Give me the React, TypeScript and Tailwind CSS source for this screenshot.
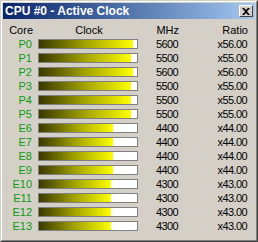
import React from 'react';

type Row = { core: string; mhz: number };

const rows: Row[] = [
  { core: 'P0', mhz: 5600 },
  { core: 'P1', mhz: 5500 },
  { core: 'P2', mhz: 5600 },
  { core: 'P3', mhz: 5500 },
  { core: 'P4', mhz: 5500 },
  { core: 'P5', mhz: 5500 },
  { core: 'E6', mhz: 4400 },
  { core: 'E7', mhz: 4400 },
  { core: 'E8', mhz: 4400 },
  { core: 'E9', mhz: 4400 },
  { core: 'E10', mhz: 4300 },
  { core: 'E11', mhz: 4300 },
  { core: 'E12', mhz: 4300 },
  { core: 'E13', mhz: 4300 },
];

const MAX_MHZ = 5850;

const ClockBar = ({ mhz }: { mhz: number }) => {
  const pct = Math.min(100, (mhz / MAX_MHZ) * 100);
  return (
    <div className="w-[100px] h-[10px] border border-[#808080] bg-white">
      <div
        className="h-full bg-gradient-to-r from-[#3a3a00] via-[#a4a400] to-[#ffff00]"
        style={{ width: `${pct}%` }}
      />
    </div>
  );
};

const App = () => {
  return (
    <div
      className="w-[258px] h-[242px] bg-[#d4d0c8] border border-t-[#d4d0c8] border-l-[#d4d0c8] border-r-[#404040] border-b-[#404040] overflow-hidden"
      style={{ fontFamily: '"Liberation Sans", Arial, sans-serif' }}
    >
      <div className="w-full h-full border border-t-white border-l-white border-r-[#808080] border-b-[#808080] p-px">
        {/* Title bar */}
        <div className="h-[16px] flex items-center justify-between bg-gradient-to-r from-[#0a246a] to-[#a6caf0] pl-[2px] pr-[2px]">
          <span className="text-white font-bold text-[12px] leading-[16px]">
            CPU #0 - Active Clock
          </span>
          <button className="w-[14px] h-[12px] bg-[#d4d0c8] border border-t-white border-l-white border-r-[#404040] border-b-[#404040] flex items-center justify-center">
            <svg width="8" height="7" viewBox="0 0 8 7">
              <path d="M0 0h2l2 2 2-2h2L5 3.5 8 7H6L4 5 2 7H0l3-3.5z" fill="#000" />
            </svg>
          </button>
        </div>

        {/* Header */}
        <div className="flex text-[11px] leading-[13px] text-black pt-[5px]">
          <div className="w-[30px] text-right">Core</div>
          <div className="w-[6px]" />
          <div className="w-[100px] text-center">Clock</div>
          <div className="w-[40px] text-right">MHz</div>
          <div className="w-[69px] text-right">Ratio</div>
        </div>

        {/* Rows */}
        <div className="flex flex-col">
          {rows.map((r) => (
            <div key={r.core} className="flex items-center h-[14px] text-[11px] leading-[14px]">
              <div className="w-[29px] text-right text-[#0c9c0c]">{r.core}</div>
              <div className="w-[6px]" />
              <ClockBar mhz={r.mhz} />
              <div className="w-[40px] text-right text-black tracking-[-0.6px]">{r.mhz}</div>
              <div className="w-[69px] text-right text-black tracking-[-0.6px]">
                x{(r.mhz / 100).toFixed(2)}
              </div>
            </div>
          ))}
        </div>
      </div>
    </div>
  );
};

export default App;
